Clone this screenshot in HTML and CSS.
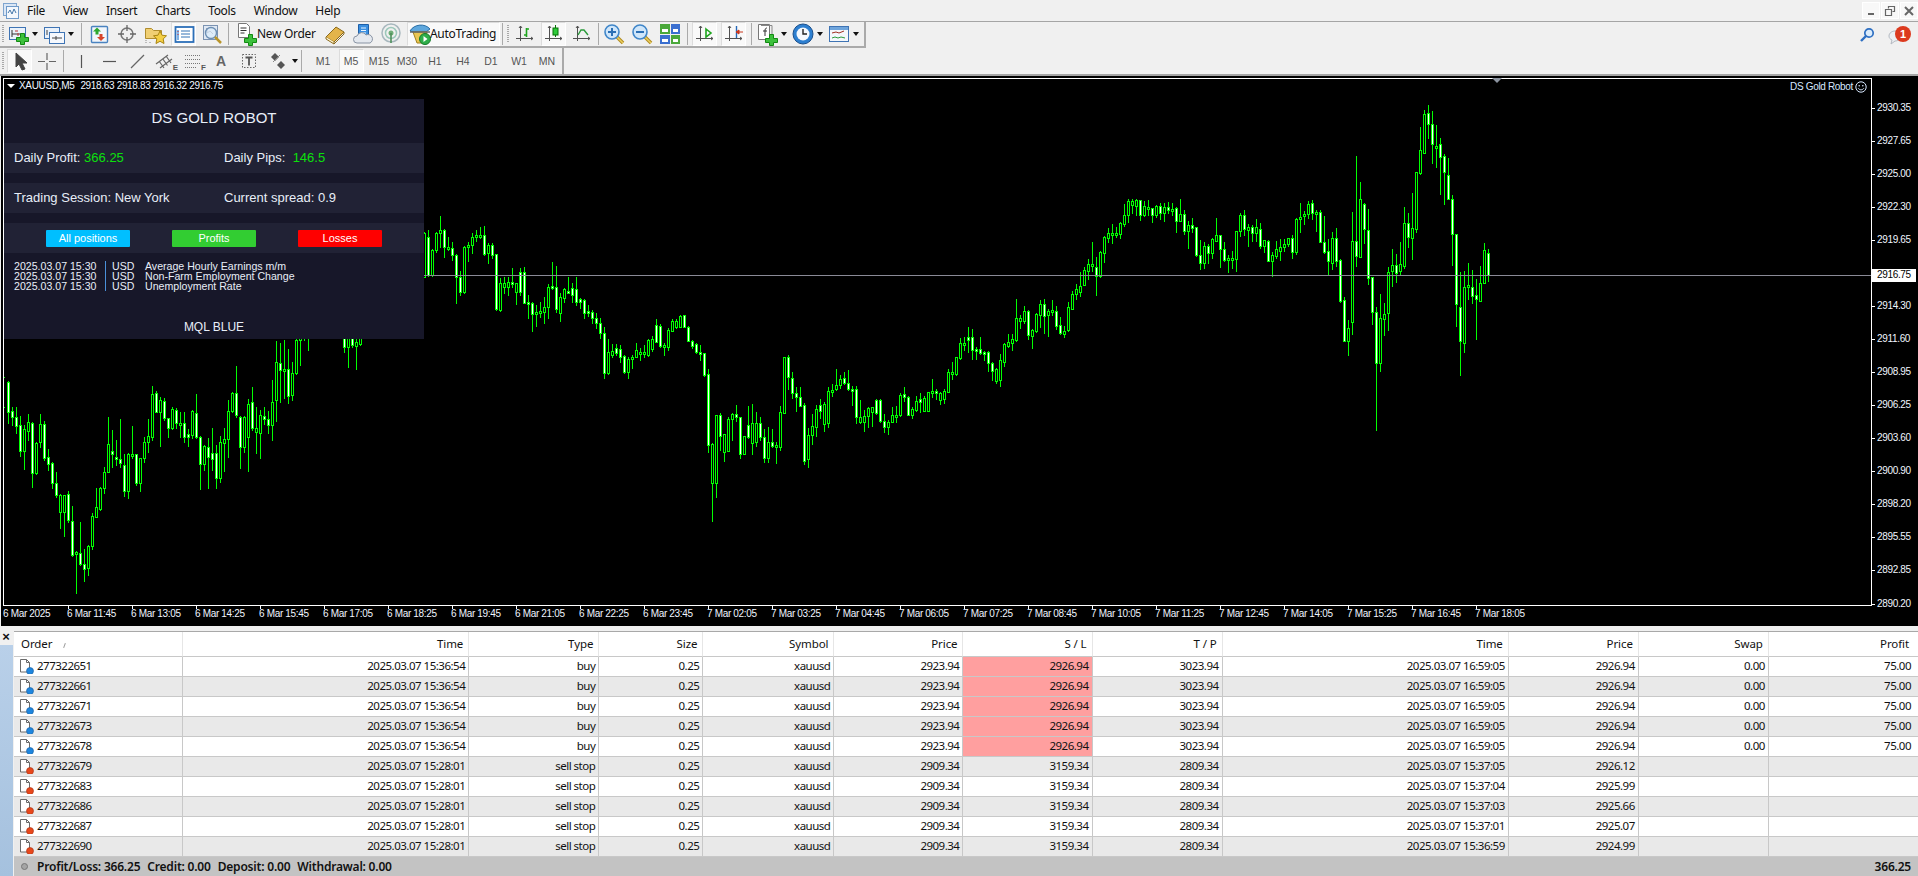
FILE: index.html
```html
<!DOCTYPE html>
<html lang="en">
<head>
<meta charset="utf-8">
<title>MetaTrader 4</title>
<link rel="stylesheet" href="styles.css">
</head>
<body>
<svg class="defs" aria-hidden="true">
  <symbol id="ord" viewBox="0 0 16 16"><path d="M2.5 1.5h6l3 3v9.5h-9z" fill="#fff" stroke="#6a6a6a"/><path d="M8.5 1.5v3h3" fill="none" stroke="#6a6a6a"/></symbol>
  <symbol id="axes" viewBox="0 0 24 24"><path d="M7.5 4v15M3 16.5h17" fill="none" stroke="#505050"/><path d="M6 6l1.5-2L9 6M18 15l2 1.5-2 1.5" fill="none" stroke="#505050"/></symbol>
  <symbol id="plus" viewBox="0 0 24 24"><path d="M15.5 12.5h4v4h4v4h-4v3h-4v-3h-4v-4h4z" fill="#3cc03c" stroke="#128a12"/></symbol>
  <symbol id="mag" viewBox="0 0 24 24"><path d="M15 15l6 6" stroke="#b08a1e" stroke-width="3.5"/><path d="M15 15l6 6" stroke="#ecd060" stroke-width="1.5"/><circle cx="10" cy="10" r="7" fill="#cfe6fa" stroke="#3f86c9" stroke-width="1.6"/></symbol>
</svg>

<header class="menu">
  <svg class="app" viewBox="0 0 16 16"><rect x=".5" y=".5" width="13" height="12" fill="#dbe7f5" stroke="#7fa5cf"/><rect x="3.5" y="3.5" width="12" height="12" fill="#f3f7fc" stroke="#6f9ac9"/><path d="M5 10l2-3 2 4 2-5 2 4" fill="none" stroke="#4477aa"/></svg>
  <nav class="menu-items"><span>File</span><span>View</span><span>Insert</span><span>Charts</span><span>Tools</span><span>Window</span><span>Help</span></nav>
  <div class="win">
    <span class="wbtn"><svg viewBox="0 0 12 12"><path d="M3 9h6" stroke="#666" stroke-width="2"/></svg></span>
    <span class="wbtn"><svg viewBox="0 0 12 12"><path d="M4.5 3.5V1.5h6v5h-2M1.5 4.5h6v6h-6z" fill="none" stroke="#666" stroke-width="1.2"/></svg></span>
    <span class="wbtn"><svg viewBox="0 0 12 12"><path d="M2 2l8 8M10 2l-8 8" stroke="#666" stroke-width="2"/></svg></span>
  </div>
</header>

<div class="row one">
  <div class="tools t1">
    <i class="grip"></i>
    <span class="drop"><svg class="ic" viewBox="0 0 24 24"><rect x="3.5" y="5.5" width="16" height="12" fill="#eaf2fb" stroke="#3f74b4"/><path d="M6 8v7M6 12h9" stroke="#333"/><path d="M9 9h3M12 11v3" stroke="#b33"/><use href="#plus" x="-1" y="-1"/></svg><b class="caret"></b></span>
    <span class="drop"><svg class="ic" viewBox="0 0 24 24"><rect x="2.5" y="5.5" width="15" height="11" fill="#eaf2fb" stroke="#3f74b4"/><rect x="7.5" y="10.5" width="15" height="11" fill="#f5f8fd" stroke="#3f74b4"/><path d="M5 8v5M10 16h10M14 14v4" stroke="#444"/></svg><b class="caret"></b></span>
    <i class="sep s7"></i>
    <span class="btn"><svg class="ic" viewBox="0 0 24 24"><rect x="4.5" y="4.5" width="16" height="16" rx="1" fill="#f2f6fb" stroke="#4a83c0" stroke-width="1.4"/><path d="M10 5l4 4h-2.5v3h-3V9H6z" fill="#2fa82f" transform="translate(0 .5)"/><path d="M14 19l4-4h-2.5v-3h-3v3H10z" fill="#d6452a"/></svg></span>
    <span class="btn"><svg class="ic" viewBox="0 0 24 24"><circle cx="12" cy="12" r="6" fill="none" stroke="#777" stroke-width="1.5"/><path d="M12 3v6M12 15v6M3 12h6M15 12h6" stroke="#666" stroke-width="1.3"/></svg></span>
    <span class="btn"><svg class="ic" viewBox="0 0 24 24"><path d="M2.5 6.5h6l2 2h8v8h-16z" fill="#f0cf73" stroke="#b08d2e"/><path d="M17 9l2 4.200 4.500.6-3.300 3.100.8 4.600-4-2.200-4 2.200.8-4.600-3.300-3.100 4.500-.6z" fill="#f4cf45" stroke="#a98512"/><path d="M3 18v4M7 20v2" stroke="#888" stroke-dasharray="1 1"/></svg></span>
    <span class="btn on"><svg class="ic" viewBox="0 0 24 24"><rect x="3.5" y="5" width="18" height="15" fill="#fff" stroke="#2c6fb8" stroke-width="1.8"/><path d="M5 8h2v10H5z" fill="#7fb2e6"/><path d="M9 9h9M9 12h9M9 15h9" stroke="#3372b5"/><path d="M5.500 9.500h1M5.500 12.500h1" stroke="#c33"/></svg></span>
    <span class="btn"><svg class="ic" viewBox="0 0 24 24"><rect x="3.5" y="3.5" width="14" height="14" fill="#dfe8f3" stroke="#7b93b2"/><path d="M7 6v5l3-2 3 3" fill="none" stroke="#667"/><circle cx="11" cy="11" r="5.5" fill="#dcecfa" fill-opacity=".8" stroke="#6d8fb3" stroke-width="1.4"/><path d="M15 15l6 6" stroke="#b9952b" stroke-width="2.5"/></svg></span>
    <i class="sep s4"></i>
    <span class="btn wide"><svg class="ic" viewBox="0 0 24 24"><path d="M5.500 1.500h8l3 3v11h-11z" fill="#fff" stroke="#777"/><path d="M7.500 6h6M7.500 8.500h6M7.500 11h4" stroke="#333"/><use href="#plus" x="0" y="0"/></svg><span class="lbl">New Order</span></span>
    <span class="btn"><svg class="ic" viewBox="0 0 24 24"><path d="M3 15L13 5l8 5-10 10z" fill="#e3b44a" stroke="#8b6a1d"/><path d="M3 15v2l8 5v-2" fill="#fff4cf" stroke="#8b6a1d"/><path d="M21 10v2l-10 10" fill="none" stroke="#8b6a1d"/></svg></span>
    <span class="btn"><svg class="ic" viewBox="0 0 24 24"><path d="M7.500 2.500h10v11h-10z" fill="#3a8fe0" stroke="#1d5fa8"/><path d="M10 6h5M10 8.500h5M10 11h5" stroke="#e8f4ff"/><path d="M6 21a3.500 3.500 0 0 1 0-7 5 5 0 0 1 9-1 4 4 0 0 1 4 8z" fill="#e4e8ee" stroke="#8893a3"/></svg></span>
    <span class="btn"><svg class="ic" viewBox="0 0 24 24"><circle cx="12" cy="11" r="9" fill="none" stroke="#a8b8be" stroke-width="1.5"/><circle cx="12" cy="11" r="5.500" fill="none" stroke="#9cc8ba" stroke-width="1.5"/><circle cx="12" cy="11" r="2.500" fill="#6fae78"/><path d="M12 11v10" stroke="#4e8f5a" stroke-width="1.6"/></svg></span>
    <span class="auto"><svg class="ic" viewBox="0 0 24 24"><path d="M2 9c4-7 15-8 20-2l-4 3H6z" fill="#5ea7dd" stroke="#2a6ea5"/><path d="M5 10h14l-2 11H9z" fill="#e9c552" stroke="#a1801d"/><path d="M2 10h20" stroke="#666" stroke-width="1.5"/><circle cx="17" cy="17" r="5.500" fill="#2fae4a" stroke="#167a2a"/><path d="M15.500 14l4 3-4 3z" fill="#fff"/></svg><span class="lbl">AutoTrading</span></span>
    <i class="sep s5"></i>
    <i class="grip g2"></i>
    <span class="btn"><svg class="ic" viewBox="0 0 24 24"><use href="#axes"/><path d="M13.500 6v9M11 13h2.500M13.500 7H16" fill="none" stroke="#1fa51f" stroke-width="1.6"/></svg></span>
    <span class="btn on"><svg class="ic" viewBox="0 0 24 24"><use href="#axes"/><path d="M13.500 3v12" stroke="#067306"/><rect x="11" y="6" width="5" height="7" fill="#2ecb3a" stroke="#067306"/></svg></span>
    <span class="btn"><svg class="ic" viewBox="0 0 24 24"><use href="#axes"/><path d="M8 13l3-5 3 0 4 5" fill="none" stroke="#2a9a3a" stroke-width="1.4"/></svg></span>
    <i class="sep s4"></i>
    <span class="btn"><svg class="ic" viewBox="0 0 24 24"><use href="#mag"/><path d="M6 10h8M10 6v8" stroke="#2a6fb5" stroke-width="2"/></svg></span>
    <span class="btn"><svg class="ic" viewBox="0 0 24 24"><use href="#mag"/><path d="M6 10h8" stroke="#2a6fb5" stroke-width="2"/></svg></span>
    <span class="btn"><svg class="ic" viewBox="0 0 24 24"><path d="M2 2h10v10H2z" fill="#4aa83a"/><path d="M13 2h9v10h-9z" fill="#3a6fd0"/><path d="M2 13h10v9H2z" fill="#3a6fd0"/><path d="M13 13h9v9h-9z" fill="#4aa83a"/><path d="M4 7h6v3H4zM15 7h5v3h-5zM4 17h6v3H4zM15 17h5v3h-5z" fill="#fff"/></svg></span>
    <i class="sep s6"></i>
    <span class="btn on"><svg class="ic" viewBox="0 0 24 24"><use href="#axes"/><path d="M13 7l5 4-5 4z" fill="none" stroke="#1fa51f" stroke-width="1.6"/></svg></span>
    <span class="btn on"><svg class="ic" viewBox="0 0 24 24"><use href="#axes"/><path d="M14.500 4v12" stroke="#2468b8" stroke-width="1.4"/><path d="M21 10h-4M17 8l-3 2 3 2z" fill="#c8371c" stroke="#c8371c"/></svg></span>
    <i class="sep s7"></i>
    <span class="drop"><svg class="ic" viewBox="0 0 24 24"><path d="M3.500 2.500h11v15h-11z" fill="#fff" stroke="#777"/><path d="M6 3.500h11v14" fill="none" stroke="#888"/><path d="M10 14V8c0-2 2-2 2-2M8 9h4" fill="none" stroke="#333"/><use href="#plus" x="-1" y="0"/></svg><b class="caret"></b></span>
    <span class="drop"><svg class="ic" viewBox="0 0 24 24"><circle cx="12" cy="12" r="10" fill="#2d7fd0" stroke="#1a4f8c"/><circle cx="12" cy="12" r="6.500" fill="#f4f8fd"/><path d="M12 7v5h4" fill="none" stroke="#222" stroke-width="1.4"/></svg><b class="caret"></b></span>
    <span class="drop"><svg class="ic" viewBox="0 0 24 24"><rect x="2.500" y="4.500" width="19" height="15" fill="#f4f8fc" stroke="#3f74b4"/><path d="M3 5h18v3H3z" fill="#6fa5dc"/><path d="M5 11l4-1 3 1 5-2" fill="none" stroke="#a03020"/><path d="M5 16l3-1 3 1 3-1 4 1" fill="none" stroke="#2a9a3a"/></svg><b class="caret"></b></span>
  </div>
  <div class="side">
    <svg class="s-search" viewBox="0 0 16 16"><circle cx="10" cy="6" r="4.200" fill="#dcecfb" stroke="#2e6fc2" stroke-width="1.7"/><path d="M7 9l-5 5" stroke="#2e6fc2" stroke-width="2.4"/></svg>
    <span class="chat"><svg viewBox="0 0 16 16"><path d="M2 7c0-3 3-5 6-5s6 2 6 5-3 5-6 5l-4 3 1-4c-2-1-3-2-3-4z" fill="#eceff2" stroke="#b4bac2"/></svg><b class="badge">1</b></span>
  </div>
</div>

<div class="row two">
  <div class="tools t2">
    <i class="grip"></i>
    <span class="btn on first"><svg class="ic" viewBox="0 0 24 24"><path d="M8 4l11 10h-5l3 6-3 1-3-6-3 3z" fill="#444" stroke="#444" stroke-linejoin="round"/></svg></span>
    <span class="btn"><svg class="ic" viewBox="0 0 24 24"><path d="M12 4v7M12 14v7M3 12.500h7M14 12.500h7" stroke="#666" stroke-width="1.2"/></svg></span>
    <i class="sep s5"></i>
    <span class="btn"><svg class="ic" viewBox="0 0 24 24"><path d="M12.500 6v13" stroke="#555" stroke-width="1.2"/></svg></span>
    <span class="btn"><svg class="ic" viewBox="0 0 24 24"><path d="M6 12.500h13" stroke="#555" stroke-width="1.2"/></svg></span>
    <span class="btn"><svg class="ic" viewBox="0 0 24 24"><path d="M6 19L19 6" stroke="#666" stroke-width="1.2"/></svg></span>
    <span class="btn"><svg class="ic" viewBox="0 0 24 24"><path d="M3 15L15 6M7 19L19 10M6 12l5 7M9.500 9.500l5 7M13 7l5 7" stroke="#666" stroke-width="1.2" fill="none"/></svg><b class="tag">E</b></span>
    <span class="btn"><svg class="ic" viewBox="0 0 24 24"><path d="M4 6.500h15M4 10.500h15M4 14.500h15M4 18.500h11" stroke="#777" stroke-dasharray="1 1"/></svg><b class="tag">F</b></span>
    <span class="btn glyph">A</span>
    <span class="btn"><svg class="ic" viewBox="0 0 24 24"><rect x="5.500" y="5.500" width="13" height="13" fill="none" stroke="#666" stroke-dasharray="1.500 1.500"/><path d="M8.500 8.500h7M12 8.500v8" stroke="#555" stroke-width="1.8"/></svg></span>
    <span class="drop pad"><svg class="ic" viewBox="0 0 24 24"><path d="M9 4l4 4-4 4-4-4zM15 12l4 4-4 4-4-4z" fill="#555"/><path d="M7 13l7-7" stroke="#888"/></svg><b class="caret"></b></span>
    <i class="sep s6 mr5"></i>
    <span class="tf">M1</span><span class="tf"><span class="tf-on">M5</span></span><span class="tf">M15</span><span class="tf">M30</span><span class="tf">H1</span><span class="tf">H4</span><span class="tf">D1</span><span class="tf">W1</span><span class="tf">MN</span>
  </div>
</div>

<main class="chart" id="chart">
  <svg class="plot" id="plot" viewBox="0 76 1918 550"></svg>
  <div class="legend"><i class="tri"></i><span>XAUUSD,M5</span><span class="ohlc">2918.63 2918.83 2916.32 2916.75</span></div>
  <div class="ea">DS Gold Robot<svg viewBox="0 0 12 12"><circle cx="6" cy="6" r="5.200" fill="none" stroke="#d8e8ff"/><circle cx="4.200" cy="4.700" r=".8" fill="#d8e8ff"/><circle cx="7.800" cy="4.700" r=".8" fill="#d8e8ff"/><path d="M3.200 7.300c1.500 2 4.100 2 5.600 0" fill="none" stroke="#d8e8ff"/></svg></div>
  <i class="shift"></i>

  <section class="panel">
    <h1>DS GOLD ROBOT</h1>
    <div class="strip"><span class="cell">Daily Profit: <em>366.25</em></span><span class="cell">Daily Pips: &nbsp;<em>146.5</em></span></div>
    <div class="strip"><span class="cell">Trading Session: New York</span><span class="cell">Current spread: 0.9</span></div>
    <div class="strip btns"><span class="pbtn blue">All positions</span><span class="pbtn green">Profits</span><span class="pbtn red">Losses</span></div>
    <div class="news">
      <span>2025.03.07 15:30</span><span class="cur">USD</span><span>Average Hourly Earnings m/m</span>
      <span>2025.03.07 15:30</span><span class="cur">USD</span><span>Non-Farm Employment Change</span>
      <span>2025.03.07 15:30</span><span class="cur">USD</span><span>Unemployment Rate</span>
    </div>
    <footer>MQL BLUE</footer>
  </section>
</main>

<div class="terminal">
  <aside class="strip-left"><span class="close">×</span><i class="tab"></i></aside>
  <div class="term-main">
    <table>
      <colgroup><col class="c-order"><col class="c-time"><col class="c-type"><col class="c-size"><col class="c-sym"><col class="c-price"><col class="c-price"><col class="c-type"><col class="c-time"><col class="c-type"><col class="c-type"><col class="c-profit"></colgroup>
      <thead><tr><th class="l">Order<i class="sort"></i></th><th>Time</th><th>Type</th><th>Size</th><th>Symbol</th><th>Price</th><th>S / L</th><th>T / P</th><th>Time</th><th>Price</th><th>Swap</th><th>Profit</th></tr></thead>
      <tbody>
        <tr><td class="l"><svg class="oi"><use href="#ord"/><circle class="dot-b" cx="12" cy="13" r="3.500"/></svg>277322651</td><td>2025.03.07 15:36:54</td><td>buy</td><td>0.25</td><td>xauusd</td><td>2923.94</td><td class="hit">2926.94</td><td>3023.94</td><td>2025.03.07 16:59:05</td><td>2926.94</td><td>0.00</td><td>75.00</td></tr>
        <tr><td class="l"><svg class="oi"><use href="#ord"/><circle class="dot-b" cx="12" cy="13" r="3.500"/></svg>277322661</td><td>2025.03.07 15:36:54</td><td>buy</td><td>0.25</td><td>xauusd</td><td>2923.94</td><td class="hit">2926.94</td><td>3023.94</td><td>2025.03.07 16:59:05</td><td>2926.94</td><td>0.00</td><td>75.00</td></tr>
        <tr><td class="l"><svg class="oi"><use href="#ord"/><circle class="dot-b" cx="12" cy="13" r="3.500"/></svg>277322671</td><td>2025.03.07 15:36:54</td><td>buy</td><td>0.25</td><td>xauusd</td><td>2923.94</td><td class="hit">2926.94</td><td>3023.94</td><td>2025.03.07 16:59:05</td><td>2926.94</td><td>0.00</td><td>75.00</td></tr>
        <tr><td class="l"><svg class="oi"><use href="#ord"/><circle class="dot-b" cx="12" cy="13" r="3.500"/></svg>277322673</td><td>2025.03.07 15:36:54</td><td>buy</td><td>0.25</td><td>xauusd</td><td>2923.94</td><td class="hit">2926.94</td><td>3023.94</td><td>2025.03.07 16:59:05</td><td>2926.94</td><td>0.00</td><td>75.00</td></tr>
        <tr><td class="l"><svg class="oi"><use href="#ord"/><circle class="dot-b" cx="12" cy="13" r="3.500"/></svg>277322678</td><td>2025.03.07 15:36:54</td><td>buy</td><td>0.25</td><td>xauusd</td><td>2923.94</td><td class="hit">2926.94</td><td>3023.94</td><td>2025.03.07 16:59:05</td><td>2926.94</td><td>0.00</td><td>75.00</td></tr>
        <tr><td class="l"><svg class="oi"><use href="#ord"/><circle class="dot-r" cx="12" cy="13" r="3.500"/></svg>277322679</td><td>2025.03.07 15:28:01</td><td>sell stop</td><td>0.25</td><td>xauusd</td><td>2909.34</td><td>3159.34</td><td>2809.34</td><td>2025.03.07 15:37:05</td><td>2926.12</td><td></td><td></td></tr>
        <tr><td class="l"><svg class="oi"><use href="#ord"/><circle class="dot-r" cx="12" cy="13" r="3.500"/></svg>277322683</td><td>2025.03.07 15:28:01</td><td>sell stop</td><td>0.25</td><td>xauusd</td><td>2909.34</td><td>3159.34</td><td>2809.34</td><td>2025.03.07 15:37:04</td><td>2925.99</td><td></td><td></td></tr>
        <tr><td class="l"><svg class="oi"><use href="#ord"/><circle class="dot-r" cx="12" cy="13" r="3.500"/></svg>277322686</td><td>2025.03.07 15:28:01</td><td>sell stop</td><td>0.25</td><td>xauusd</td><td>2909.34</td><td>3159.34</td><td>2809.34</td><td>2025.03.07 15:37:03</td><td>2925.66</td><td></td><td></td></tr>
        <tr><td class="l"><svg class="oi"><use href="#ord"/><circle class="dot-r" cx="12" cy="13" r="3.500"/></svg>277322687</td><td>2025.03.07 15:28:01</td><td>sell stop</td><td>0.25</td><td>xauusd</td><td>2909.34</td><td>3159.34</td><td>2809.34</td><td>2025.03.07 15:37:01</td><td>2925.07</td><td></td><td></td></tr>
        <tr><td class="l"><svg class="oi"><use href="#ord"/><circle class="dot-r" cx="12" cy="13" r="3.500"/></svg>277322690</td><td>2025.03.07 15:28:01</td><td>sell stop</td><td>0.25</td><td>xauusd</td><td>2909.34</td><td>3159.34</td><td>2809.34</td><td>2025.03.07 15:36:59</td><td>2924.99</td><td></td><td></td></tr>
      </tbody>
    </table>
    <div class="status"><i class="led"></i><span>Profit/Loss: 366.25</span><span>Credit: 0.00</span><span>Deposit: 0.00</span><span>Withdrawal: 0.00</span><span class="total">366.25</span></div>
  </div>
</div>
<script src="chart.js"></script>
</body>
</html>
```
FILE: styles.css
```css
* { box-sizing: border-box; }
html, body { margin: 0; height: 876px; overflow: hidden; }
body {
  display: flex; flex-direction: column; width: 1918px; height: 876px;
  background: #f0f0f0; color: #111;
  font: 12px/1 "Noto Sans", "Liberation Sans", sans-serif;
}
.defs { position: absolute; width: 0; height: 0; }

/* menu */
.menu { display: flex; align-items: center; height: 22px; flex: none; border-bottom: 1px solid #a5a5a5; padding-left: 3px; }
.app { width: 16px; height: 16px; flex: none; }
.menu-items { display: flex; margin-left: -1px; font-size: 12px; letter-spacing: -.32px; }
.menu-items span { padding: 0 9px; }
.win { display: flex; margin-left: auto; gap: 1px; }
.wbtn { width: 18px; height: 17px; display: flex; align-items: center; justify-content: center; background: #f8f8f8; border: 1px solid #fff; }
.wbtn svg { width: 12px; height: 12px; }

/* toolbars */
.row { display: flex; flex: none; }
.row.one { height: 26px; }
.row.two { height: 28px; border-bottom: 2px solid #a5a5a5; }
.tools { display: flex; align-items: center; border-right: 2px solid #aaa; }
.t1 { width: 866px; border-bottom: 2px solid #aaa; padding-bottom: 1px; }
.t2 { width: 564px; }
.ic { width: 24px; height: 24px; flex: none; display: block; }
.grip { width: 6px; height: 18px; flex: none; background: repeating-linear-gradient(#a8a8a8 0 1px, transparent 1px 2px) 2px 0 / 2px 100% no-repeat; }
.btn { position: relative; flex: none; width: 28px; height: 24px; display: flex; align-items: center; justify-content: center; }
.btn.on { width: 25px; margin: 0 2px; background: #f9f9f9; border: 1px solid #dcdcdc; border-right-color: #fff; border-bottom-color: #fff; }
.btn.first { margin: 0 1px 0 1px; }
.btn.wide { width: 91px; justify-content: flex-start; padding-left: 3px; }
.lbl { font-size: 12px; letter-spacing: -.3px; white-space: nowrap; }
.drop { flex: none; width: 32px; margin-right: 4px; display: flex; align-items: center; }
.drop.pad { margin: 0 0 0 3px; }
.caret { width: 0; height: 0; margin-left: 2px; border: 3px solid transparent; border-top: 4px solid #111; border-bottom: 0; }
.sep { flex: none; height: 22px; display: block; background: linear-gradient(#aaa, #aaa) center / 1px 100% no-repeat; }
.s4 { width: 4px; } .s5 { width: 5px; } .s6 { width: 6px; } .s7 { width: 7px; }
.s5 + .btn { margin-left: 1px; }
.mr5 { margin-right: 5px; }
.auto { flex: none; width: 93px; height: 24px; margin-left: 2px; display: flex; align-items: center; background: #f9f9f9; border: 1px solid #dcdcdc; border-right-color: #fff; border-bottom-color: #fff; }
.auto .ic { margin-right: -2px; }
.tag { position: absolute; right: 1px; bottom: 1px; font: bold 8px/1 "Liberation Sans", sans-serif; color: #555; }
.glyph { font: bold 14px/1 "Liberation Sans", sans-serif; color: #666; }
.tf { flex: none; width: 28px; height: 24px; display: flex; align-items: center; justify-content: center; font: 10.5px/1 "Liberation Sans", sans-serif; color: #555; }
.tf-on { width: 25px; height: 24px; display: flex; align-items: center; justify-content: center; background: #f9f9f9; border: 1px solid #dcdcdc; border-right-color: #fff; border-bottom-color: #fff; }
.side { display: flex; align-items: center; margin-left: auto; padding-right: 7px; gap: 12px; }
.s-search { width: 16px; height: 16px; }
.chat { position: relative; width: 24px; height: 20px; }
.chat svg { position: absolute; left: 0; bottom: 0; width: 16px; height: 16px; }
.badge { position: absolute; right: 0; top: 1px; width: 16px; height: 16px; border-radius: 50%; background: #dc3a1e; color: #fff; font: bold 11px/16px "Liberation Sans", sans-serif; text-align: center; }

/* chart */
.chart { position: relative; flex: none; height: 550px; background: #000; box-shadow: inset 1px 0 0 #f0f0f0; font: 10px/1 "Liberation Sans", sans-serif; letter-spacing: -.33px; color: #fff; overflow: hidden; }
.plot { position: absolute; left: 0; top: 0; width: 1918px; height: 550px; shape-rendering: crispEdges; }
.legend { position: absolute; left: 7px; top: 5px; display: flex; align-items: center; color: #f0f6ff; }
.tri { width: 0; height: 0; margin-right: 4px; border: 4px solid transparent; border-top: 4px solid #fff; border-bottom: 0; }
.ohlc { margin-left: 6px; }
.ea { position: absolute; right: 51px; top: 5px; display: flex; align-items: center; gap: 2px; color: #d8e8ff; }
.ea svg { width: 12px; height: 12px; }
.shift { position: absolute; left: 1492px; top: 2px; width: 0; height: 0; border: 5px solid transparent; border-top: 5px solid #8c94a0; border-bottom: 0; }
.px { position: absolute; left: 1877px; width: 38px; height: 12px; line-height: 12px; color: #f0f6ff; white-space: nowrap; }
.px.now { left: 1872px; width: 44px; padding-left: 5px; height: 13px; background: #fff; color: #000; }
.tx { position: absolute; line-height: 12px; color: #f0f6ff; white-space: nowrap; }

/* panel */
.panel { position: absolute; left: 4px; top: 23px; width: 420px; height: 240px; background: #171729; color: #e8eef8; display: flex; flex-direction: column; font-family: "Liberation Sans", sans-serif; letter-spacing: 0; }
.panel h1 { margin: 0; height: 44px; flex: none; font: 15px/38px "Liberation Sans", sans-serif; text-align: center; }
.strip { flex: none; height: 30px; margin-bottom: 10px; padding-bottom: 1px; background: #212235; display: flex; align-items: center; font-size: 13px; }
.cell { width: 210px; padding-left: 10px; white-space: pre; }
.cell em { font-style: normal; color: #0ce00c; }
.btns { margin-bottom: 0; gap: 42px; padding: 0 0 0 42px; }
.pbtn { width: 84px; height: 17px; font-size: 11px; line-height: 17px; text-align: center; color: #fff; border-radius: 1px; }
.blue { background: #00bfff; } .green { background: #32cd32; } .red { background: #f00; }
.news { display: grid; grid-template-columns: 91px 40px 1fr; grid-auto-rows: 10px; padding: 8px 0 0 10px; font-size: 10.6px; line-height: 10px; }
.cur { border-left: 1px solid #4a90d9; padding-left: 6px; }
.panel footer { margin-top: auto; height: 24px; font-size: 12px; line-height: 24px; text-align: center; }

/* terminal */
.terminal { flex: 1; display: flex; margin-top: 5px; min-height: 0; }
.strip-left { flex: none; width: 14px; display: flex; flex-direction: column; }
.close { height: 14px; flex: none; font: bold 13px/12px "Liberation Sans", sans-serif; text-align: center; padding-right: 2px; }
.tab { flex: 1; margin-right: 1px; background: linear-gradient(#b9d0e9, #a5c1de); }
.term-main { flex: 1; min-width: 0; display: flex; flex-direction: column; border-top: 1px solid #a8a8a8; }
table { width: 1904px; table-layout: fixed; border-collapse: separate; border-spacing: 0; background: #fff; font-size: 11.5px; letter-spacing: -.5px; }
.c-order { width: 169px; } .c-time { width: 286px; } .c-type { width: 130px; } .c-size { width: 104px; } .c-sym { width: 131px; } .c-price { width: 129px; } .c-profit { width: 149px; }
th, td { padding: 0 3px 0 0; text-align: right; font-weight: 400; overflow: hidden; white-space: nowrap; }
th { height: 25px; padding-right: 5px; border-right: 1px solid #e6e6e6; border-bottom: 1px solid #c8c8c8; letter-spacing: -.1px; }
td { height: 20px; padding-bottom: 2px; border-right: 1px solid #c8c8c8; border-bottom: 1px solid #c8c8c8; }
th:last-child { border-right: 0; padding-right: 9px; }
td:last-child { border-right: 0; padding-right: 7px; }
th.l { text-align: left; padding-left: 7px; }
td.l { text-align: left; padding-left: 4px; }
tbody tr:nth-child(even) td { background: #e9e9e9; }
tbody tr td.hit { background: #ff9f9f; }
.sort { display: inline-block; width: 1px; height: 5px; margin-left: 12px; background: #999; transform: rotate(20deg); }
.oi { width: 16px; height: 16px; vertical-align: -4px; margin-right: 3px; }
.dot-b { fill: #1f86de; stroke: #155a9a; stroke-width: .6; }
.dot-r { fill: #e8481c; stroke: #a12d0e; stroke-width: .6; }
.status { flex: 1; display: flex; align-items: center; gap: 7px; padding-left: 7px; background: #c3c3c3; font-weight: 600; font-size: 12px; letter-spacing: -.2px; white-space: nowrap; }
.led { width: 7px; height: 7px; margin-right: 2px; border-radius: 50%; background: #a5a5a5; border: 1px solid #777; }
.total { margin-left: auto; padding-right: 7px; }
```
FILE: chart.js
```js
// Candles transcribed as [bodyTop, bodyBottom, wickTop, wickBottom, bearish] in
// units of 1/3 px relative to each segment's origin.
var G = '#00ff00';
var segs = [
 {x0:4, oy:210, d:[
 [502,590,500,592],[516,606,514,640,1],[604,622,590,645,1],[622,648,590,668,1],[646,722,618,738,1],[658,722,645,776],[637,662,612,690],[640,790,635,830,1],[698,790,695,792],[643,697,612,710],[643,745,632,750,1],[740,763,717,780,1],[760,820,757,835,1],[818,856,786,860,1],[856,905,852,953],[856,907,854,978],[853,930,843,935,1],[932,1035,888,1037,1],[1026,1032,1022,1148],[1028,1062,936,1065,1],[1062,1078,1018,1112,1],[1008,1075,1005,1095],[918,1007,910,1016],[892,920,835,922],[833,897,831,900],[785,833,771,850],[703,785,622,787],[722,733,660,770,1],[742,748,690,765,1],[748,760,628,770,1],[764,842,733,858,1],[732,842,728,865],[733,737,648,745],[733,820,731,826,1],[745,820,743,843],[697,745,680,757],[678,697,628,725],[552,680,528,690],[550,605,542,607,1],[570,605,560,708],[572,624,565,630,1],[625,654,623,680,1],[597,655,590,657],[600,640,595,655,1],[640,645,605,680],[640,680,605,695,1],[672,682,658,707,1],[604,675,600,683],[608,680,552,685,1],[680,763,678,838,1],[708,763,705,780],[710,740,685,835,1],[730,748,655,780,1],[730,805,705,833,1],[695,805,678,815],[688,700,655,782],[604,688,570,740],[550,604,545,606],[550,615,468,620,1],[620,712,618,773,1],[620,712,618,725],[583,680,568,782],[575,655,532,660,1],[655,665,590,730],[615,668,600,743],[617,628,590,642,1],[628,645,603,670,1],[575,645,510,690],[457,570,392,633],[458,480,400,575,1],[478,482,390,565],[478,558,418,578,1],[488,556,455,570],[390,490,380,492],[370,390,360,465],[360,378,350,390],[360,385,350,420],null,null,null,null,null,null,null,[340,370,330,380],[370,410,360,425,1],[370,412,360,470],[385,405,375,410,1],[397,407,380,476],[370,403,360,405]
 ]},
 {x0:424, oy:210, d:[
 [70,200,65,202],[80,195,60,197,1],[120,195,118,197],[68,120,65,125],[60,70,18,112],[60,112,58,142,1],[112,118,80,120],[115,135,96,150,1],[135,200,133,280,1],[200,245,182,255,1],[110,245,108,250],[105,106,95,152],[80,105,70,130],[75,82,60,92],[74,78,52,85],[76,132,48,135,1],[105,130,100,158],[105,135,98,145,1],[133,298,131,300,1]
 ]},
 {x0:500, oy:180, infer:1, d:[
 [310,390,295,392],[310,320,292,340],[305,320,290,345],[305,308,265,320],[310,335,308,372],[275,335,265,345],[275,368,262,370],[366,369,345,415],[368,403,366,452],[397,403,375,437],[392,395,365,410],[382,395,352,428],[320,382,312,413],[317,320,247,327],[320,388,258,395],[352,398,340,422],[328,355,325,365],[332,335,292,335],[325,345,308,365],[328,365,292,375],[358,365,355,385],[360,400,358,415],[394,397,375,408],[395,415,390,428],[415,428,400,445],[428,460,415,475],[460,580,442,593],[515,580,478,581],[512,525,492,530],[505,520,492,526],[508,532,495,545],[528,575,525,578],[538,575,532,593],[531,535,525,563],[511,530,490,532],[517,522,505,540],[517,520,495,530],[480,525,478,527],[478,508,468,512],[436,485,418,487],[438,498,432,500],[495,502,490,525],[450,500,445,510],[423,452,418,453],[423,440,418,443],[408,440,405,442],[406,440,405,442],[440,482,438,484],[483,497,480,505],[492,515,490,518],[517,519,495,540],[520,585,518,588],[583,795,568,815],[793,908,790,1022],[706,908,704,952],[706,767,700,810],[763,815,762,842],[716,812,712,813],[703,718,700,780],[703,710,675,722],[712,822,710,833],[769,822,767,823],[736,772,678,773],[730,788,672,822],[730,785,697,798],[730,770,712,780],[772,833,748,846],[787,833,742,846],[787,798,747,800],[796,797,785,848],[697,800,678,810],[532,698,530,700],[532,592,525,628],[595,640,575,654],[640,650,622,692],[650,677,622,679],[676,842,670,851],[766,838,745,860],[737,765,702,792],[688,740,675,767],[676,692,657,714],[673,733,665,752],[634,730,622,740],[630,632,612,648],[616,628,568,630],[596,614,586,624],[593,608,576,612],[608,628,570,630],[628,630,618,675],[628,712,618,728],[712,725,660,728],[707,727,690,752],[683,707,682,740],[682,697,680,737],[660,700,658,702],[660,722,658,725],[722,740,702,755],[726,740,720,762],[706,725,682,727],[704,707,678,725],[645,705,640,708],[643,650,622,662],[650,704,648,706],[688,704,682,715],[664,690,648,692],[658,665,640,695],[655,692,648,694],[637,692,636,694],[633,640,598,650],[633,636,628,658],[640,660,636,671],[633,658,628,668],[576,635,568,637],[577,583,545,597],[532,582,530,584],[490,535,475,537],[490,492,472,510],[472,480,442,515],[472,510,448,537],[507,512,500,537],[508,518,472,522],[516,518,512,540],[516,550,514,572],[550,572,545,600],[567,602,565,608]
 ]},
 {x0:1000, oy:180, d:[
 [540,600,522,618],[492,545,490,558],[487,497,462,500],[478,488,462,510],[415,480,358,482],[415,422,405,445],[393,423,378,428],[393,465,391,478,1],[450,468,448,503],[402,453,400,456],[373,404,360,442],[373,407,358,460,1],[394,404,388,468],[390,393,360,405],[394,438,378,447,1],[436,460,412,462,1],[454,462,438,472],[382,450,365,452],[343,386,334,388],[328,342,312,357],[318,335,277,348],[270,314,262,316],[252,272,237,298],[252,258,186,272],[260,287,232,345,1],[216,288,212,291],[172,218,168,246],[160,173,145,186],[160,164,132,188],[158,164,140,170],[130,162,125,174],[106,132,72,138],[64,104,58,125],[64,74,58,100],[61,77,56,106],[61,105,59,120,1],[78,105,64,107],[80,85,60,105],[85,104,83,126,1],[78,105,74,112],[79,100,70,118,1],[82,98,70,123],[80,90,67,100,1],[88,90,70,106],[85,122,82,156,1],[102,122,57,124],[103,152,90,162,1],[136,152,123,204],[136,143,114,156,1],[142,225,140,228,1],[224,248,180,267,1],[198,248,185,264],[198,218,192,250,1],[178,218,175,234],[166,182,114,184],[166,208,164,262,1],[208,240,186,242,1],[235,240,226,276],[235,240,213,264],[154,236,152,274],[105,152,100,168],[105,146,90,165,1],[142,150,132,198],[142,160,136,182,1],[140,160,117,182],[148,197,130,205,1],[181,197,179,217],[183,242,180,244,1],[226,242,216,288],[208,227,184,234],[202,212,178,240],[193,202,178,212],[175,193,173,197],[175,215,166,234,1],[117,216,115,222]
 ]},
 {x0:1300, oy:90, d:[
 [382,388,338,426],[372,376,362,402],[343,373,333,385],[340,370,330,387,1],[367,373,360,422],[367,455,360,457,1],[455,487,378,489,1],[484,512,447,556,1],[445,520,427,537],[445,512,414,528,1],[510,632,507,635,1],[630,752,622,754,1],[715,752,690,795],[453,697,366,732],[453,497,198,528,1],[328,500,277,502],[343,418,340,460,1],[420,563,358,582,1],[562,665,560,702,1],[667,820,652,1020,1],[685,820,612,843],[672,688,640,735],[547,670,532,720],[526,544,477,587],[526,548,492,575,1],[522,544,457,555],[400,527,352,533],[400,440,370,470,1],[415,445,310,507],[247,418,245,426],[180,248,112,252],[72,188,60,190],[70,103,45,144,1],[103,161,64,219,1],[168,173,106,231],[163,200,145,312,1],[198,247,192,342,1],[256,326,205,328,1],[328,433,316,525,1],[433,643,431,708,1],[652,754,547,855,1],[590,760,543,786],[586,590,520,628],[590,617,540,640,1],[616,628,568,747,1],[580,632,528,634],[481,578,460,580],[488,556,478,572,1]
 ]}
];

var wicks = '', bodies = '', fills = { '#ffffff': '', '#000000': '' };
segs.forEach(function (s) {
  s.d.forEach(function (c, i) {
    if (!c) return;
    var x = s.x0 + 4 * i;
    var t = Math.round(s.oy + c[0] / 3), b = Math.round(s.oy + c[1] / 3);
    var h = Math.round(s.oy + c[2] / 3), l = Math.round(s.oy + c[3] / 3);
    if (b - t < 2) b = t + 2;
    var bear = c[4];
    if (s.infer) {
      var n = s.d[i + 1];
      bear = n ? (n[0] + n[1] > c[0] + c[1]) : 0;
    }
    wicks += 'M' + x + ' ' + h + 'h1V' + (l + 1) + 'h-1z';
    if (x > 4) bodies += 'M' + (x - 1) + ' ' + t + 'h3V' + (b + 1) + 'h-3z';
    fills[bear ? '#ffffff' : '#000000'] += 'M' + x + ' ' + (t + 1) + 'h1V' + b + 'h-1z';
  });
});

var priceY = [];
var prices = ['2930.35','2927.65','2925.00','2922.30','2919.65','','2914.30','2911.60','2908.95','2906.25','2903.60','2900.90','2898.20','2895.55','2892.85','2890.20'];
var ticks = '';
prices.forEach(function (p, i) {
  var y = Math.round(107.5 + i * 33.07);
  if (i !== 5) ticks += 'M1872 ' + y + 'h3v1h-3z';
  priceY.push(y);
});
var times = ['6 Mar 11:45','6 Mar 13:05','6 Mar 14:25','6 Mar 15:45','6 Mar 17:05','6 Mar 18:25','6 Mar 19:45','6 Mar 21:05','6 Mar 22:25','6 Mar 23:45','7 Mar 02:05','7 Mar 03:25','7 Mar 04:45','7 Mar 06:05','7 Mar 07:25','7 Mar 08:45','7 Mar 10:05','7 Mar 11:25','7 Mar 12:45','7 Mar 14:05','7 Mar 15:25','7 Mar 16:45','7 Mar 18:05'];
times.forEach(function (t, i) { ticks += 'M' + (68 + 64 * i) + ' 605h1v4h-1z'; });

document.getElementById('plot').innerHTML =
  '<path fill="' + G + '" d="' + wicks + bodies + '"/>' +
  '<path fill="#ffffff" d="' + fills['#ffffff'] + '"/>' +
  '<path fill="#000000" d="' + fills['#000000'] + '"/>' +
  '<rect x="4" y="275" width="1867" height="1" fill="#8a8a96"/>' +
  '<rect x="3.5" y="78.5" width="1868" height="526.5" fill="none" stroke="#ffffff"/>' +
  '<path fill="#ffffff" d="' + ticks + '"/>';

var chart = document.getElementById('chart');
function label(cls, text, left, top) {
  var e = document.createElement('span');
  e.className = cls;
  e.textContent = text;
  if (left !== null) e.style.left = left + 'px';
  e.style.top = top + 'px';
  chart.appendChild(e);
}
prices.forEach(function (p, i) { if (p) label('px', p, null, priceY[i] - 76 - 6); });
label('px now', '2916.75', null, 269 - 76);
label('tx', '6 Mar 2025', 3, 532);
times.forEach(function (t, i) { label('tx', t, 67 + 64 * i, 532); });
```
